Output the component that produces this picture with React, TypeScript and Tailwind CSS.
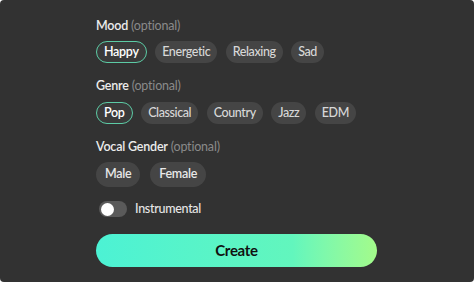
const Chip = ({ label, active, tall }: { label: string; active?: boolean; tall?: boolean }) => {
  return (
    <button
      className={
        active
          ? "flex h-[22px] items-center rounded-full border-[1.5px] border-[#5ccba5] bg-[#3a3a3a] px-[7px] text-[12.5px] font-semibold tracking-[-0.3px] text-white"
          : tall
            ? "flex h-[25px] items-center rounded-full bg-[#454545] px-[9px] text-[12.5px] font-semibold tracking-[-0.3px] text-[#e8e8e8]"
            : "flex h-[22px] items-center rounded-full bg-[#454545] px-[7px] text-[12.5px] font-medium tracking-[-0.4px] text-[#d8d8d8]"
      }
    >
      {label}
    </button>
  );
};

const Label = ({ title }: { title: string }) => {
  return (
    <div className="h-[18px] text-[12.5px] leading-[18px] tracking-[-0.2px] text-[#ececec]">
      <span className="font-semibold">{title}</span>{" "}
      <span className="text-[#8a8a8a]">(optional)</span>
    </div>
  );
};

export default function App() {
  return (
    <div className="h-[282px] w-[474px] bg-white" style={{ fontFamily: 'Lato, "Noto Sans", sans-serif' }}>
      <div className="flex h-full flex-col rounded-[4px] bg-[#323232] pl-[96px] pt-[17px]">
        <Label title="Mood" />
        <div className="mt-[6px] flex gap-[8.5px]">
          <Chip label="Happy" active />
          <Chip label="Energetic" />
          <Chip label="Relaxing" />
          <Chip label="Sad" />
        </div>

        <div className="mt-[14px]">
          <Label title="Genre" />
        </div>
        <div className="mt-[7px] flex gap-[8.5px]">
          <Chip label="Pop" active />
          <Chip label="Classical" />
          <Chip label="Country" />
          <Chip label="Jazz" />
          <Chip label="EDM" />
        </div>

        <div className="mt-[14px]">
          <Label title="Vocal Gender" />
        </div>
        <div className="mt-[6px] flex gap-[10px]">
          <Chip label="Male" tall />
          <Chip label="Female" tall />
        </div>

        <div className="mt-[14px] flex h-[16px] items-center gap-[8px] pl-[3px]">
          <div className="flex h-[16px] w-[28px] items-center rounded-full bg-[#5a5a5a] px-[1.5px]">
            <div className="h-[13px] w-[13px] rounded-full bg-white" />
          </div>
          <span className="text-[12.5px] font-medium tracking-[-0.3px] text-[#e6e6e6]">Instrumental</span>
        </div>

        <button className="mt-[17px] flex h-[33px] w-[281px] items-center justify-center rounded-full bg-gradient-to-r from-[#4cf2d4] via-[#62f6bd] via-70% to-[#a3fb8a] text-[15px] font-bold tracking-[-0.3px] text-[#111]">
          Create
        </button>
      </div>
    </div>
  );
}
